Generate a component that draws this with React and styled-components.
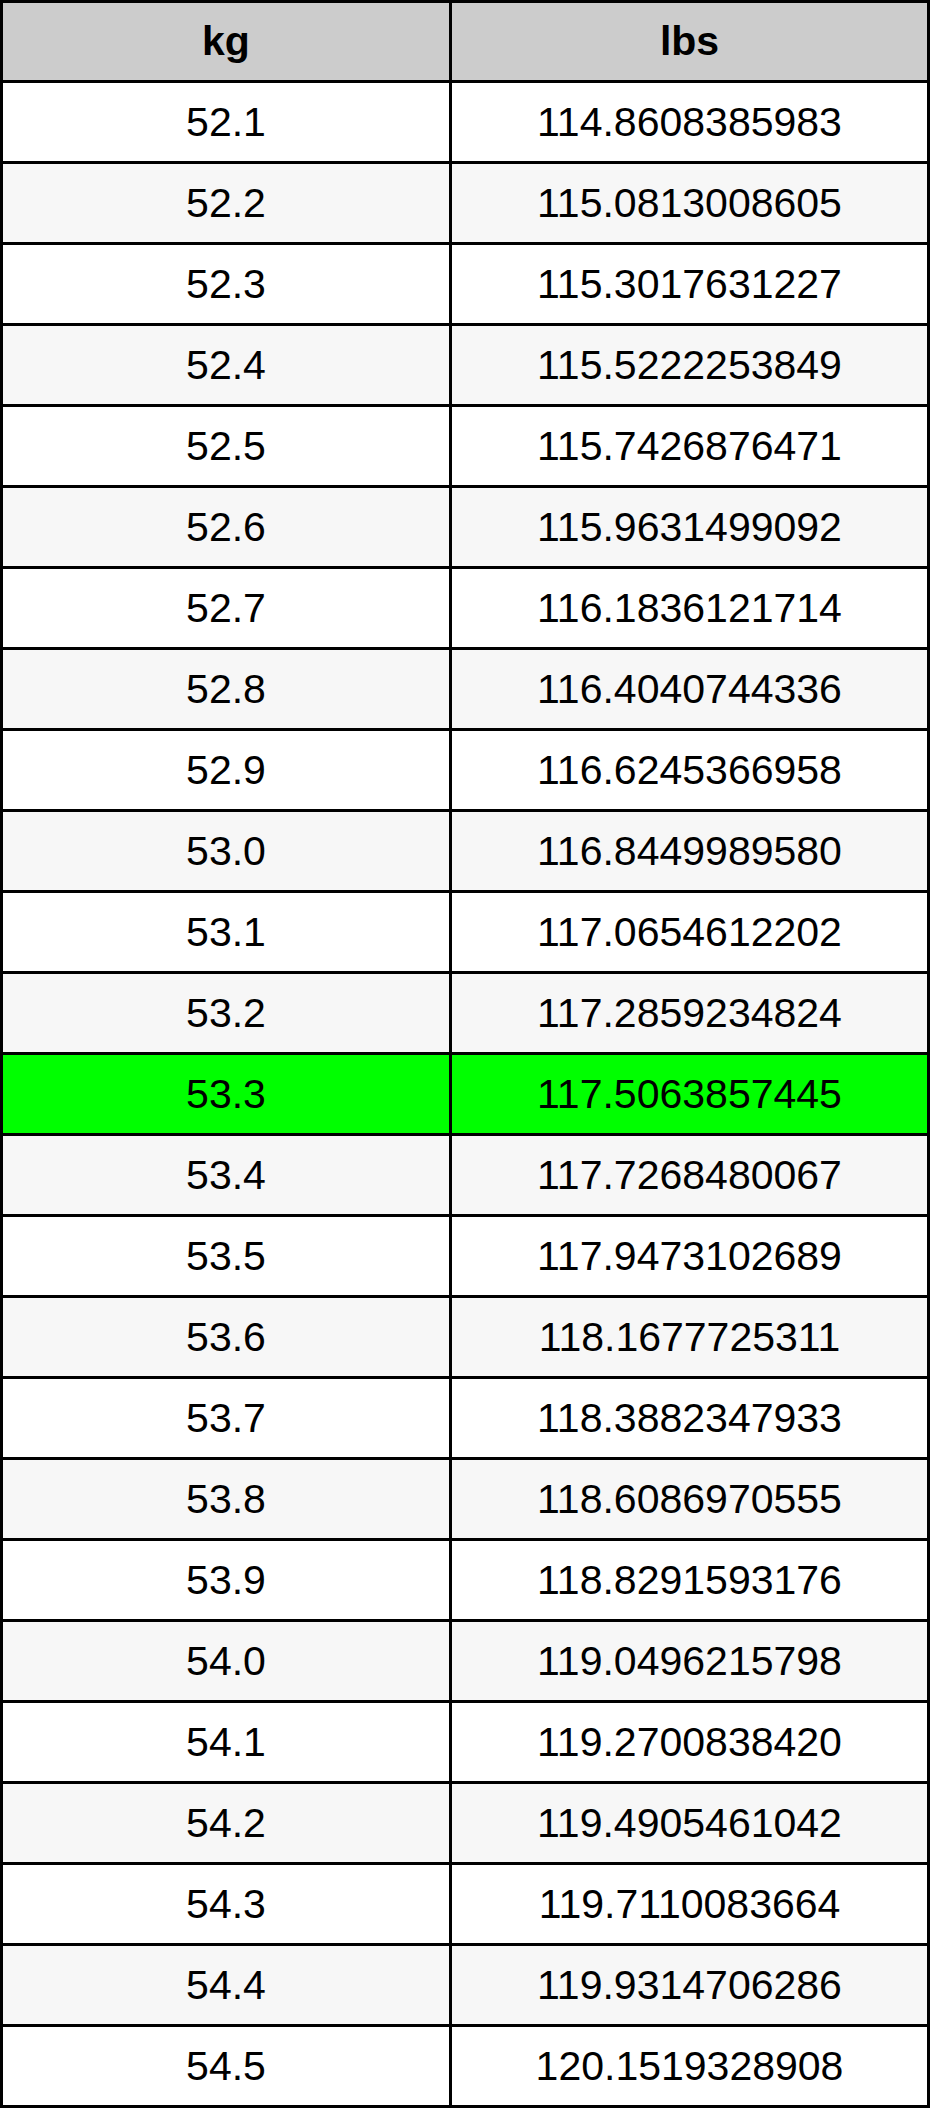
import React from 'react';
import styled, { createGlobalStyle } from 'styled-components';

const rows = [
	['52.1', '114.8608385983'],
	['52.2', '115.0813008605'],
	['52.3', '115.3017631227'],
	['52.4', '115.5222253849'],
	['52.5', '115.7426876471'],
	['52.6', '115.9631499092'],
	['52.7', '116.1836121714'],
	['52.8', '116.4040744336'],
	['52.9', '116.6245366958'],
	['53.0', '116.8449989580'],
	['53.1', '117.0654612202'],
	['53.2', '117.2859234824'],
	['53.3', '117.5063857445'],
	['53.4', '117.7268480067'],
	['53.5', '117.9473102689'],
	['53.6', '118.1677725311'],
	['53.7', '118.3882347933'],
	['53.8', '118.6086970555'],
	['53.9', '118.8291593176'],
	['54.0', '119.0496215798'],
	['54.1', '119.2700838420'],
	['54.2', '119.4905461042'],
	['54.3', '119.7110083664'],
	['54.4', '119.9314706286'],
	['54.5', '120.1519328908']
];

const highlighted = '53.3';

export default function App() {
	return (
		<>
			<GlobalStyle />
			<ConversionTable>
				<HeaderCell>kg</HeaderCell>
				<HeaderCell>lbs</HeaderCell>
				{rows.map(([kg, lbs], i) => {
					const tone = kg === highlighted ? 'hit' : i % 2 === 0 ? 'light' : 'shade';
					return (
						<React.Fragment key={kg}>
							<Cell tone={tone}>{kg}</Cell>
							<Cell tone={tone}>{lbs}</Cell>
						</React.Fragment>
					);
				})}
			</ConversionTable>
		</>
	);
}

const GlobalStyle = createGlobalStyle`
	body {
		margin: 0;
		background: #ffffff;
		font-family: "Liberation Sans", Arial, sans-serif;
	}
`;

const ConversionTable = styled.div`
	display: grid;
	grid-template-columns: 446px 475px;
	grid-auto-rows: 78px;
	grid-template-rows: 77px;
	gap: 3px;
	padding: 3px;
	width: 930px;
	box-sizing: border-box;
	background: #000000;
`;

const HeaderCell = styled.div`
	display: flex;
	align-items: center;
	justify-content: center;
	background: #cccccc;
	color: #000000;
	font-size: 41px;
	font-weight: bold;
`;

const toneColors = {
	light: '#ffffff',
	shade: '#f7f7f7',
	hit: '#00ff00'
};

const Cell = styled.div`
	display: flex;
	align-items: center;
	justify-content: center;
	background: ${({ tone }) => toneColors[tone]};
	color: #000000;
	font-size: 41px;
`;
